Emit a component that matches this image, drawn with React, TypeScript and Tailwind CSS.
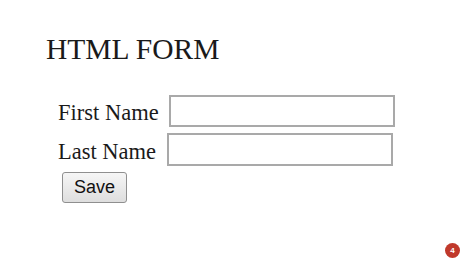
import React from 'react';

const serif = { fontFamily: '"Liberation Serif", "DejaVu Serif", serif' };

export default function App() {
  return (
    <div className="relative w-[474px] h-[266px] bg-white overflow-hidden" style={serif}>
      <div className="pl-[46px] pt-[32px]">
        <h1 className="text-[29.5px] leading-[34px] text-[#1a1a1a]">HTML FORM</h1>
      </div>
      <div className="pl-[58px] pt-[29px] flex flex-col">
        <div className="flex items-center h-[32px]">
          <span className="text-[22.5px] leading-[32px] pt-[3px] text-[#1a1a1a] w-[111px]">First Name</span>
          <input className="w-[226px] h-[32px] border-2 border-[#a9a9a9] bg-white" />
        </div>
        <div className="flex items-center h-[33px] mt-[6px]">
          <span className="text-[22.5px] leading-[33px] pt-[3px] text-[#1a1a1a] w-[109px]">Last Name</span>
          <input className="w-[226px] h-[33px] border-2 border-[#a9a9a9] bg-white" />
        </div>
        <div className="mt-[6px] pl-[4px]">
          <button
            className="w-[65px] h-[31px] rounded-[3px] border border-[#8f8f8f] bg-gradient-to-b from-[#f6f6f6] to-[#dedede] text-[18px] text-[#111]"
            style={{ fontFamily: '"Liberation Sans", Arial, sans-serif' }}
          >
            Save
          </button>
        </div>
      </div>
      <div
        className="absolute left-[445px] top-[243px] w-[15px] h-[15px] rounded-full bg-[#c0392b] flex items-center justify-center text-white text-[8px] font-bold"
        style={{ fontFamily: '"Liberation Sans", Arial, sans-serif' }}
      >
        4
      </div>
    </div>
  );
}
